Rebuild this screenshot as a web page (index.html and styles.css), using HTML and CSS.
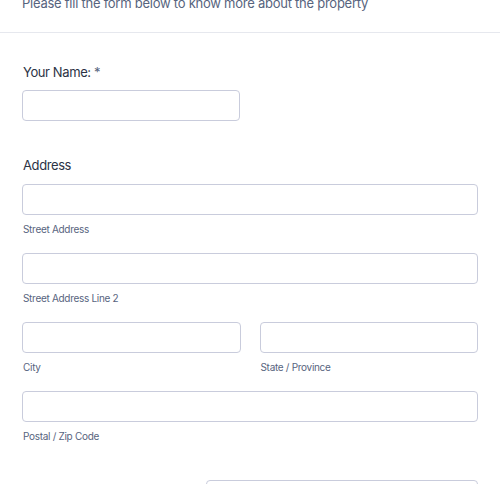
FILE: index.html
```
<!DOCTYPE html>
<html>
    <head>
        <link rel="stylesheet" href="styles.css">
    </head>
    <body>
        <div class="form">
            <div class="form-header">
                <p class="subtitle">Please fill the form below to know more about the property</p>
            </div>
            <ul class="fields">
                <li class="field">
                    <label class="label">Your Name: <span class="req">*</span></label>
                    <input type="text" class="input input-half" />
                </li>
                <li class="field field-address">
                    <label class="label">Address</label>
                    <div class="sub">
                        <input type="text" class="input" />
                        <span class="sublabel">Street Address</span>
                    </div>
                    <div class="sub">
                        <input type="text" class="input" />
                        <span class="sublabel">Street Address Line 2</span>
                    </div>
                    <div class="sub-row">
                        <div class="sub">
                            <input type="text" class="input" />
                            <span class="sublabel">City</span>
                        </div>
                        <div class="sub">
                            <input type="text" class="input" />
                            <span class="sublabel">State / Province</span>
                        </div>
                    </div>
                    <div class="sub">
                        <input type="text" class="input" />
                        <span class="sublabel">Postal / Zip Code</span>
                    </div>
                </li>
                <li class="field field-inline">
                    <label class="label">Phone Number</label>
                    <input type="text" class="input" />
                </li>
            </ul>
        </div>
    </body>
</html>
```

FILE: styles.css
```
*, *:after, *:before {
    box-sizing: border-box;
    margin: 0;
    padding: 0;
}
body {
    font-family: Inter, "Noto Sans", sans-serif;
    background: #FFF;
    overflow: hidden;
}
.form {
    margin-top: -10px;
}
.form-header {
    padding: 0 22px 16px;
    border-bottom: 1px solid #e6e8ee;
}
.subtitle {
    font-size: 13px;
    letter-spacing: -0.25px;
    line-height: 26px;
    color: #57647e;
}
.fields {
    list-style: none;
    padding: 0 22px;
}
.field {
    padding-top: 29px;
}
.label {
    display: block;
    font-size: 13px;
    letter-spacing: -0.4px;
    line-height: 20px;
    color: #2c3345;
    padding-left: 1px;
    margin-bottom: 8px;
}
.req {
    color: #57647e;
}
.input {
    display: block;
    width: 100%;
    height: 31px;
    border: 1px solid #c9ccdc;
    border-radius: 4px;
    background: #FFF;
    outline: none;
}
.input-half {
    width: 218px;
}
.field-address {
    padding-top: 34px;
}
.field-address .label {
    margin-bottom: 9px;
}
.sub {
    flex: 1;
    margin-bottom: 17px;
}
.sub-row {
    display: flex;
    gap: 19px;
}
.sublabel {
    display: block;
    font-size: 10px;
    letter-spacing: -0.3px;
    line-height: 14px;
    color: #57647e;
    padding-left: 1px;
    margin-top: 7px;
}
.field-inline {
    display: flex;
    padding-top: 20px;
}
.field-inline .label {
    width: 184px;
    flex: none;
    margin-top: 12px;
}
```
